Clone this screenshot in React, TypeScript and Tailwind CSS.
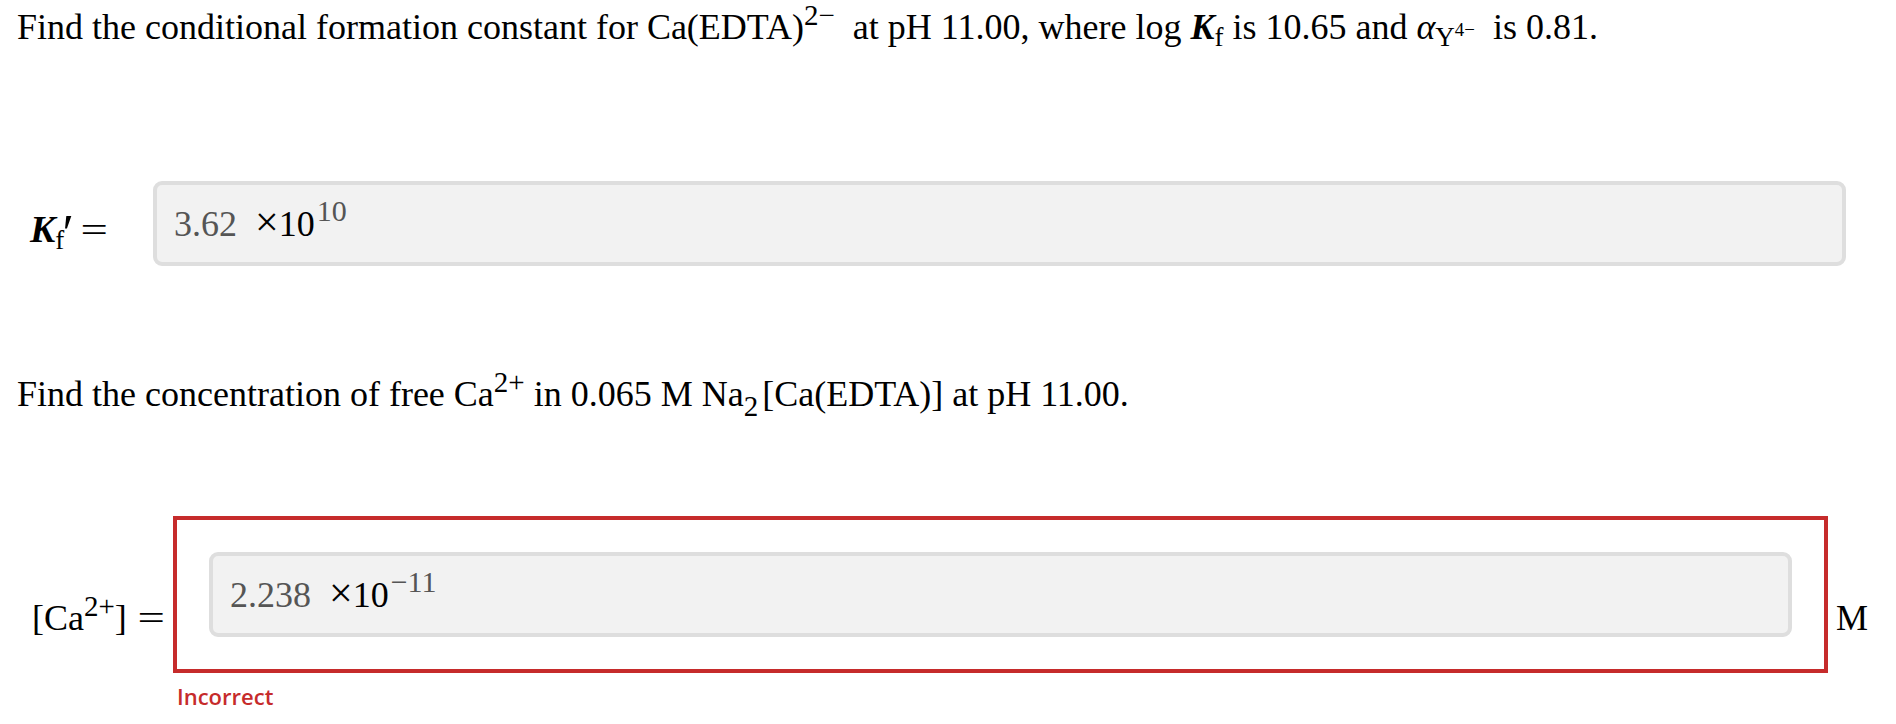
import React from "react";

function ValueBox({ value, exp }: { value: string; exp: string }) {
  return (
    <div className="h-[85px] w-full rounded-[9px] border-4 border-[#dedede] bg-[#f2f2f2] pl-[17px] pt-[17px]">
      <div className="whitespace-nowrap text-[36px] leading-[40px]">
        <span className="text-[#555555]">{value}</span>
        <span className="ml-[18px] text-black">
          <span className="text-[42px]">×</span>10
        </span>
        <span className="relative top-[-15px] ml-[2px] text-[30px] text-[#555555]">{exp}</span>
      </div>
    </div>
  );
}

function Eq({ left }: { left: string }) {
  return <span className={`${left} mr-[8px] inline-block scale-x-[1.35]`}>=</span>;
}

export default function App() {
  return (
    <div className="h-[724px] w-[1896px] overflow-hidden bg-white font-['Liberation_Serif','Times_New_Roman',serif] text-black">
      <p className="whitespace-nowrap pl-[17px] pt-[7px] text-[36px] leading-[40px]">
        Find the conditional formation constant for Ca(EDTA)<sup className="text-[29px]">2−</sup>&nbsp; at pH 11.00,
        where log <i className="font-bold">K</i>
        <sub>f</sub> is 10.65 and <i>α</i>
        <sub>
          Y<sup className="text-[70%]">4−</sup>
        </sub>
        &nbsp; is 0.81.
      </p>

      <div className="mt-[134px] flex items-start pr-[50px]">
        <div className="w-[153px] shrink-0 whitespace-nowrap pl-[30px] pt-[28px] text-[36px] leading-[40px]">
          <i className="text-[38px] font-bold">K</i>
          <span className="relative inline-block">
            <span className="absolute left-[6px] top-[6px] scale-[1.45] text-[36px] italic leading-[36px]">′</span>
            <sub>f</sub>
          </span>
          <Eq left="ml-[20px]" />
        </div>
        <div className="flex-1">
          <ValueBox value="3.62" exp="10" />
        </div>
      </div>

      <p className="mt-[108px] whitespace-nowrap pl-[17px] text-[36px] leading-[40px]">
        Find the concentration of free Ca<sup className="text-[29px]">2+</sup> in 0.065 M Na
        <sub className="bottom-[-0.33em] mr-[4px] text-[29px]">2</sub>[Ca(EDTA)] at pH 11.00.
      </p>

      <div className="mt-[102px] flex items-start pr-[28px]">
        <div className="w-[173px] shrink-0 whitespace-nowrap pl-[32px] pt-[82px] text-[36px] leading-[40px]">
          [Ca<sup className="text-[29px]">2+</sup>]
          <Eq left="ml-[14px]" />
        </div>
        <div className="flex-1 border-4 border-[#c62b2b] p-[32px]">
          <ValueBox value="2.238" exp="−11" />
        </div>
        <div className="ml-[8px] shrink-0 pt-[82px] text-[36px] leading-[40px]">M</div>
      </div>

      <div className="mt-[8px] pl-[177px] font-['Open_Sans',sans-serif] text-[22px] font-semibold leading-[30px] text-[#c62b2b]">
        Incorrect
      </div>
    </div>
  );
}
